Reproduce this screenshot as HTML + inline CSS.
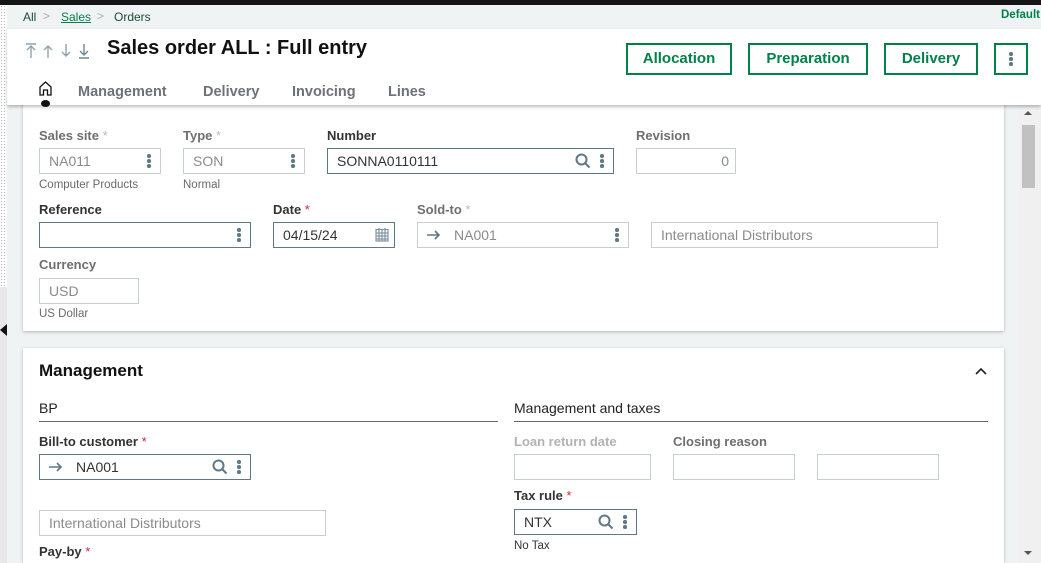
<!DOCTYPE html>
<html style="overflow:hidden;height:563px"><head><meta charset="utf-8">
<style>
*{box-sizing:border-box;margin:0;padding:0}
body{width:1041px;height:563px;overflow:hidden;background:#eff3f3;font-family:"Liberation Sans",sans-serif;position:relative;color:#222}
.a{position:absolute}
.top{left:0;top:0;width:1041px;height:5px;background:#151515}
.crumb{left:7px;top:5px;width:1034px;height:24px;background:#eff3f3;font-size:12px;color:#1c4c36}
.hdr{left:7px;top:29px;width:1034px;height:76px;background:#fff;box-shadow:0 2px 3px rgba(0,0,0,.25);z-index:2}
.btn{top:43px;height:32px;border:2px solid #00814a;color:#00814a;font-weight:bold;font-size:15px;text-align:center;line-height:28px;background:#fff}
.tab{top:84px;font-size:14.5px;font-weight:bold;color:#6d7278}
.card{background:#fff;box-shadow:0 1px 3px rgba(0,0,0,.25)}
.lb{font-size:13px;font-weight:bold;color:#333}
.lb.g{color:#6f6f6f}
.lb.d{color:#b3b3b3}
.st{color:#bbb;font-weight:normal}
.rq{color:#d4263e;font-weight:normal}
.in{height:26px;border:1px solid #5e7886;background:#fff;font-size:14px;color:#333;line-height:24px;padding-left:9px}
.in.ro{border-color:#c5ced3;color:#8b8b8b}
.sub{font-size:11.5px;color:#6a6a6a}
.dots{position:absolute;right:9px;top:5px;width:4px;height:14px}
.dots i{display:block;width:3.5px;height:3.5px;border-radius:50%;background:#5e7886;margin-bottom:1.5px}
.mag{position:absolute;top:4px}
.ar{position:absolute;left:9px;top:7px}
</style></head><body>
<div class="a top"></div>
<div class="a" style="left:0;top:5px;width:7px;height:558px;background-image:radial-gradient(#bbb 0.7px,transparent 0.8px);background-size:3px 3px;background-color:#fff"></div>
<div class="a" style="left:0;top:287px;width:7px;height:276px;background:#e8e8e8"></div>
<div class="a" style="left:0;top:324px;width:0;height:0;border-top:6px solid transparent;border-bottom:6px solid transparent;border-right:7px solid #111"></div>
<div class="a crumb"><span class="a" style="left:16px;top:5px">All</span><span class="a" style="left:36px;top:4px;color:#aaa">&gt;</span><span class="a" style="left:54px;top:5px;text-decoration:underline;color:#00814a">Sales</span><span class="a" style="left:90px;top:4px;color:#aaa">&gt;</span><span class="a" style="left:107px;top:5px">Orders</span><span class="a" style="left:994px;top:4px;font-weight:bold;font-size:11.5px;color:#00814a">Default</span></div>
<div class="a hdr">
 <svg class="a" style="left:18px;top:13px" width="72" height="18" viewBox="0 0 72 18" fill="none" stroke="#8fa4ae" stroke-width="1.4"><path d="M1 2h10M6 4v12M2 8l4-4 4 4"/><path d="M23 4v12M19 8l4-4 4 4"/><path d="M41 2v12M37 10l4 4 4-4"/><path d="M59 2v11M55 9l4 4 4-4M54 16h10" stroke="#6f8996"/></svg>
 <div class="a" style="left:100px;top:8px;font-size:20px;font-weight:bold;color:#111">Sales order ALL : Full entry</div>
 <svg class="a" style="left:31px;top:52px" width="15" height="15" viewBox="0 0 15 15" fill="none" stroke="#111" stroke-width="1.3"><path d="M2 14V6l5.5-5 5.5 5v8h-3.5V9h-4v5z"/></svg>
 <div class="a" style="left:34px;top:71px;width:9px;height:7px;border-radius:50%;background:#111"></div>
</div>
<div class="a tab" style="left:78px;z-index:3">Management</div>
<div class="a tab" style="left:203px;z-index:3">Delivery</div>
<div class="a tab" style="left:292px;z-index:3">Invoicing</div>
<div class="a tab" style="left:388px;z-index:3">Lines</div>
<div class="a btn" style="left:626px;width:106px;z-index:3">Allocation</div>
<div class="a btn" style="left:748px;width:120px;z-index:3">Preparation</div>
<div class="a btn" style="left:884px;width:94px;z-index:3">Delivery</div>
<div class="a btn" style="left:994px;width:34px;z-index:3"><div class="dots" style="right:13px;top:7px"><i></i><i></i><i></i></div></div>

<div class="a" style="left:1019px;top:105px;width:22px;height:458px;background:#f0f0f0"></div>
<div class="a" style="left:1022px;top:125px;width:13px;height:63px;background:#c1c1c1"></div>
<div class="a" style="left:1024px;top:111px;border-left:4px solid transparent;border-right:4px solid transparent;border-bottom:4px solid #555"></div>
<div class="a" style="left:1024px;top:551px;border-left:4px solid transparent;border-right:4px solid transparent;border-top:4px solid #555"></div>

<div class="a card" style="left:23px;top:100px;width:981px;height:231px"></div>
<div class="a lb g" style="left:39px;top:128px">Sales site <span class="st">*</span></div>
<div class="a in ro" style="left:39px;top:148px;width:122px">NA011<div class="dots"><i></i><i></i><i></i></div></div>
<div class="a sub" style="left:39px;top:179px">Computer Products</div>
<div class="a lb g" style="left:183px;top:128px">Type <span class="st">*</span></div>
<div class="a in ro" style="left:183px;top:148px;width:122px">SON<div class="dots"><i></i><i></i><i></i></div></div>
<div class="a sub" style="left:183px;top:179px">Normal</div>
<div class="a lb" style="left:327px;top:128px">Number</div>
<div class="a in" style="left:327px;top:148px;width:287px">SONNA0110111<svg class="mag" style="right:22px" width="16" height="16" viewBox="0 0 16 16" fill="none" stroke="#5e7886" stroke-width="2"><circle cx="6.5" cy="6.5" r="5"/><path d="M10 10l4.5 4.5"/></svg><div class="dots"><i></i><i></i><i></i></div></div>
<div class="a lb g" style="left:636px;top:128px">Revision</div>
<div class="a in ro" style="left:636px;top:148px;width:100px;text-align:right;padding-right:6px">0</div>
<div class="a lb" style="left:39px;top:202px">Reference</div>
<div class="a in" style="left:39px;top:222px;width:212px"><div class="dots"><i></i><i></i><i></i></div></div>
<div class="a lb" style="left:273px;top:202px">Date <span class="rq">*</span></div>
<div class="a in" style="left:273px;top:222px;width:122px">04/15/24<svg class="mag" style="right:5px" width="14" height="15" viewBox="0 0 14 15" fill="none" stroke="#8397a2" stroke-width="1.2"><rect x="1" y="2.5" width="12" height="11.5"/><path d="M1 6h12M1 9h12M1 12h12M4 2.5v11.5M7 2.5v11.5M10 2.5v11.5M4 1v3M10 1v3"/></svg></div>
<div class="a lb g" style="left:417px;top:202px">Sold-to <span class="st">*</span></div>
<div class="a in ro" style="left:417px;top:222px;width:212px;padding-left:36px"><svg class="ar" width="13" height="10" viewBox="0 0 13 10" fill="none" stroke="#5e7886" stroke-width="1.6"><path d="M0 5h12M8 1l4 4-4 4"/></svg>NA001<div class="dots"><i></i><i></i><i></i></div></div>
<div class="a in ro" style="left:651px;top:222px;width:287px">International Distributors</div>
<div class="a lb g" style="left:39px;top:257px">Currency</div>
<div class="a in ro" style="left:39px;top:278px;width:100px">USD</div>
<div class="a sub" style="left:39px;top:308px">US Dollar</div>

<div class="a card" style="left:23px;top:348px;width:981px;height:215px"></div>
<div class="a" style="left:39px;top:361px;font-size:17px;font-weight:bold;color:#111">Management</div>
<svg class="a" style="left:974px;top:366px" width="14" height="10" viewBox="0 0 14 10" fill="none" stroke="#222" stroke-width="1.6"><path d="M2 8l5-5 5 5"/></svg>
<div class="a" style="left:39px;top:400px;font-size:14px;color:#222">BP</div>
<div class="a" style="left:39px;top:421px;width:459px;height:1px;background:#666"></div>
<div class="a" style="left:514px;top:400px;font-size:14px;color:#222">Management and taxes</div>
<div class="a" style="left:514px;top:421px;width:474px;height:1px;background:#666"></div>
<div class="a lb" style="left:39px;top:434px">Bill-to customer <span class="rq">*</span></div>
<div class="a in" style="left:39px;top:454px;width:212px;padding-left:36px"><svg class="ar" width="13" height="10" viewBox="0 0 13 10" fill="none" stroke="#5e7886" stroke-width="1.6"><path d="M0 5h12M8 1l4 4-4 4"/></svg>NA001<svg class="mag" style="right:22px" width="16" height="16" viewBox="0 0 16 16" fill="none" stroke="#5e7886" stroke-width="2"><circle cx="6.5" cy="6.5" r="5"/><path d="M10 10l4.5 4.5"/></svg><div class="dots"><i></i><i></i><i></i></div></div>
<div class="a in ro" style="left:39px;top:510px;width:287px">International Distributors</div>
<div class="a lb" style="left:39px;top:544px">Pay-by <span class="rq">*</span></div>
<div class="a lb d" style="left:514px;top:434px">Loan return date</div>
<div class="a in ro" style="left:514px;top:454px;width:137px"></div>
<div class="a lb g" style="left:673px;top:434px">Closing reason</div>
<div class="a in ro" style="left:673px;top:454px;width:122px"></div>
<div class="a in ro" style="left:817px;top:454px;width:122px"></div>
<div class="a lb" style="left:514px;top:488px">Tax rule <span class="rq">*</span></div>
<div class="a in" style="left:514px;top:509px;width:123px">NTX<svg class="mag" style="right:22px" width="16" height="16" viewBox="0 0 16 16" fill="none" stroke="#5e7886" stroke-width="2"><circle cx="6.5" cy="6.5" r="5"/><path d="M10 10l4.5 4.5"/></svg><div class="dots"><i></i><i></i><i></i></div></div>
<div class="a sub" style="left:514px;top:540px;color:#333">No Tax</div>
</body></html>
